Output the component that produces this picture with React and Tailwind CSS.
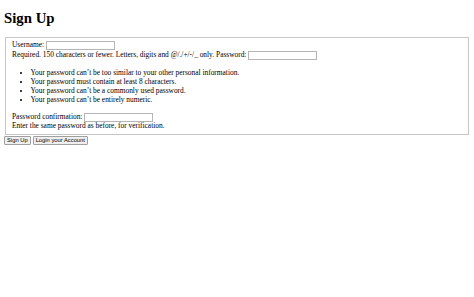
import React from "react";

const serif = { fontFamily: '"Liberation Serif", "Times New Roman", serif' };
const sans = { fontFamily: '"Liberation Sans", Arial, sans-serif' };

function Field() {
  return <input type="text" className="w-[69px] h-[9px] border border-[#b5b5b5] bg-white align-middle" />;
}

export default function App() {
  const rules = [
    "Your password can\u2019t be too similar to your other personal information.",
    "Your password must contain at least 8 characters.",
    "Your password can\u2019t be a commonly used password.",
    "Your password can\u2019t be entirely numeric.",
  ];

  return (
    <div className="min-h-[297px] bg-white px-[4px] pt-[10px] text-[7.4px] leading-[9px] text-black" style={serif}>
      <h1 className="text-[14.8px] leading-[17px] font-bold mb-[10px]">Sign Up</h1>

      <form onSubmit={e => e.preventDefault()}>
        <fieldset className="mx-[1px] border border-[#c6c6c6] px-[6px] pt-[2px] pb-[4px]">
          <div className="h-[10px]">
            Username: <Field />
          </div>
          <div>
            Required. 150 characters or fewer. Letters, digits and @/./+/-/_ only. Password: <Field />
          </div>

          <ul className="list-disc pl-[18.5px] my-[8px]">
            {rules.map(r => <li key={r}>{r}</li>)}
          </ul>

          <div className="h-[9.5px]">
            Password confirmation: <Field />
          </div>
          <div>Enter the same password as before, for verification.</div>
        </fieldset>

        <div className="flex gap-[2px] mt-[0.5px]">
          <button type="submit" className="h-[9px] px-[2px] border border-[#a0a0a0] bg-[#efefef] text-[5.8px] leading-[7px] rounded-[1px]" style={sans}>Sign Up</button>
          <button type="button" className="h-[9px] px-[2px] border border-[#a0a0a0] bg-[#efefef] text-[5.8px] leading-[7px] rounded-[1px]" style={sans}>Login your Account</button>
        </div>
      </form>
    </div>
  );
}
